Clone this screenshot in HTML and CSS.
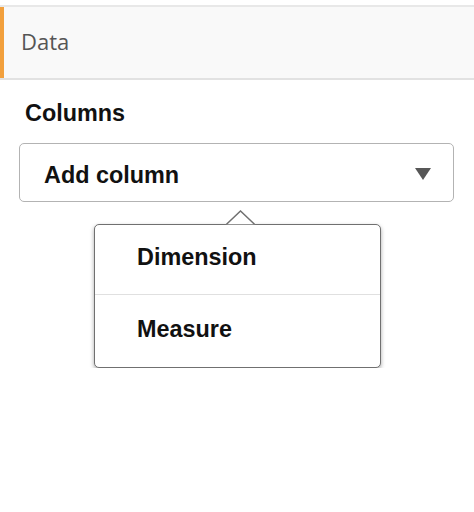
FILE: index.html
```html
<!DOCTYPE html>
<html>
<head>
<meta charset="utf-8">
<link rel="stylesheet" href="styles.css">
</head>
<body>
<div class="header"><span class="header-title">Data</span></div>
<div class="section">
  <div class="section-title">Columns</div>
  <div class="select">
    <span class="select-label">Add column</span>
    <span class="caret"></span>
  </div>
  <div class="menu">
    <svg class="menu-arrow" width="29" height="15" viewBox="0 0 29 15"><path d="M0.5 14.25 L14.5 1 L28.5 14.25" fill="#ffffff" stroke="#707070" stroke-width="1.5"/></svg>
    <div class="menu-box">
      <div class="menu-item">Dimension</div>
      <div class="menu-item menu-item-last">Measure</div>
    </div>
  </div>
</div>
</body>
</html>
```
FILE: styles.css
```css
html, body {
  margin: 0;
  padding: 0;
  background: #ffffff;
}
body {
  font-family: "Liberation Sans", Arial, sans-serif;
  color: #111111;
}
.header {
  margin-top: 5px;
  height: 75px;
  box-sizing: border-box;
  background: #f9f9f9;
  border-top: 2px solid #e8e8e8;
  border-bottom: 2px solid #e2e2e2;
  box-shadow: inset 4px 0 0 #f2a03d;
  display: flex;
  align-items: center;
  padding: 0 0 3px 21px;
}
.header-title {
  font-family: "Open Sans", "Noto Sans", sans-serif;
  font-size: 22px;
  color: #555555;
  line-height: 28px;
}
.section {
  padding: 0 20px 0 19px;
}
.section-title {
  margin-top: 19px;
  padding-left: 6px;
  font-size: 23.4px;
  font-weight: bold;
  line-height: 28px;
}
.select {
  margin-top: 16px;
  box-sizing: border-box;
  height: 59px;
  border: 1.5px solid #b3b3b3;
  border-radius: 5px;
  display: flex;
  align-items: center;
  justify-content: space-between;
  padding: 4px 22px 0 24px;
}
.select-label {
  font-size: 23.4px;
  font-weight: bold;
  line-height: 28px;
}
.caret {
  width: 0;
  height: 0;
  border-left: 8px solid transparent;
  border-right: 8px solid transparent;
  border-top: 12px solid #575757;
  margin-top: -2px;
}
.menu {
  margin: 8px 0 0 75px;
  width: 287px;
  display: flex;
  flex-direction: column;
}
.menu-arrow {
  display: block;
  margin: 0 0 -1.5px 131.5px;
  position: relative;
  z-index: 1;
}
.menu-box {
  height: 144px;
  box-sizing: border-box;
  background: #ffffff;
  border: 1.5px solid #707070;
  border-radius: 5px;
  box-shadow: 0 2px 4px rgba(0, 0, 0, 0.35);
  display: flex;
  flex-direction: column;
}
.menu-item {
  height: 70px;
  display: flex;
  align-items: center;
  padding: 0 0 4px 42px;
  box-sizing: border-box;
  font-size: 23.4px;
  font-weight: bold;
  line-height: 28px;
  border-bottom: 1px solid #e0e0e0;
}
.menu-item-last {
  flex: 1;
  border-bottom: none;
}
```
